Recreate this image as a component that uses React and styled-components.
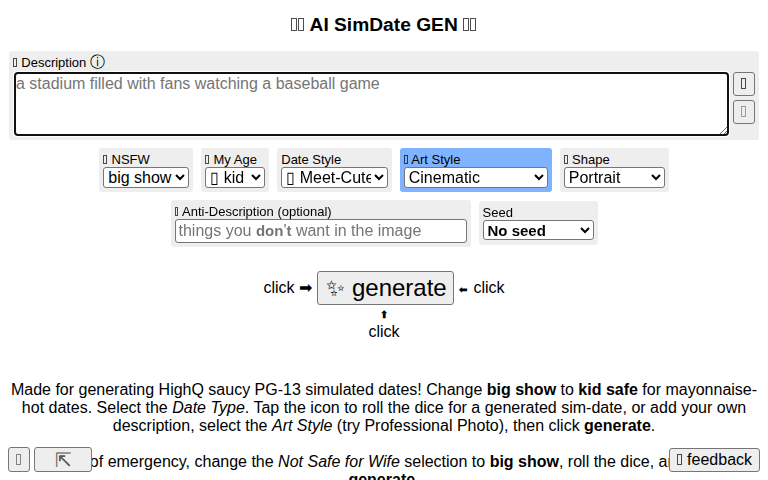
import React from 'react';
import styled, { createGlobalStyle } from 'styled-components';

const GlobalStyle = createGlobalStyle`
  html, body {
    margin: 0;
    padding: 0;
    overflow: hidden;
    height: 480px;
    background: #fff;
    font-family: "Liberation Sans", Arial, sans-serif;
    color: #000;
  }
`;

const Page = styled.div`
  padding: 0 9px;
  text-align: center;
`;

// the empty box the browser shows for an emoji it has no font for
const Tofu = styled.span`
  display: inline-block;
  box-sizing: border-box;
  width: 0.3em;
  height: 0.66em;
  margin-right: 0.06em;
  border: 1px solid currentColor;
  opacity: 0.7;
`;

const Title = styled.h1`
  margin: 0;
  padding-top: 14px;
  height: 37px;
  font-size: 19.2px;
  line-height: 21px;
  font-weight: 700;
`;

const DescriptionPanel = styled.section`
  background: #eee;
  border-radius: 3px;
  height: 89px;
  box-sizing: border-box;
  padding: 4px;
  text-align: left;
  display: flex;
  flex-direction: column;
`;

const PanelLabel = styled.label`
  display: block;
  font-size: 13px;
  line-height: 15px;
  height: 17px;
`;

const InfoMark = styled.span`
  font-family: "DejaVu Sans", sans-serif;
  font-size: 15px;
  line-height: 15px;
`;

const DescriptionRow = styled.div`
  display: flex;
  gap: 4px;
  padding-left: 1px;
`;

const DescriptionInput = styled.textarea`
  width: 715px;
  height: 64px;
  box-sizing: border-box;
  margin: 0;
  padding: 2px 1px;
  border: 1px solid #767676;
  border-radius: 3px;
  font-family: "Liberation Sans", Arial, sans-serif;
  font-size: 16px;
  line-height: 18px;
  flex: none;
`;

const SideButtons = styled.div`
  display: flex;
  flex-direction: column;
  gap: 4px;
`;

const IconButton = styled.button`
  width: 22px;
  height: 24px;
  padding: 0;
  background: #eee;
  border: 1px solid #767676;
  border-radius: 3px;
  font-family: "Liberation Sans", Arial, sans-serif;
  font-size: 16px;
  color: ${p => (p.$muted ? '#777' : '#000')};
`;

const ControlRow = styled.div`
  display: flex;
  justify-content: center;
  align-items: flex-start;
  gap: 8px;
  margin-top: ${p => p.$top}px;
`;

const Control = styled.div`
  box-sizing: border-box;
  padding: 4px;
  border-radius: 3px;
  background: ${p => (p.$active ? '#80b3ff' : '#eee')};
  text-align: left;
  height: ${p => p.$height || 44}px;
  margin-top: ${p => p.$offset || 0}px;
  font-size: 13px;
  line-height: 15px;
`;

const ControlLabel = styled.label`
  display: block;
  font-size: 13px;
  line-height: 15px;
`;

const Picker = styled.select`
  display: block;
  box-sizing: border-box;
  width: ${p => p.$width}px;
  height: ${p => p.$height || 21}px;
  margin: 0;
  font-family: "Liberation Sans", Arial, sans-serif;
  font-size: ${p => p.$size || 16}px;
  font-weight: ${p => (p.$bold ? 700 : 400)};
  background: #fff;
  color: #000;
  border: 1px solid #767676;
  border-radius: 3px;
`;

const AntiField = styled.div`
  position: relative;
  width: 292px;
  height: 24px;
`;

const AntiInput = styled.input`
  display: block;
  box-sizing: border-box;
  width: 100%;
  height: 100%;
  margin: 0;
  padding: 1px 3px;
  font-family: "Liberation Sans", Arial, sans-serif;
  font-size: 16px;
  border: 1px solid #767676;
  border-radius: 3px;
`;

const AntiHint = styled.span`
  position: absolute;
  left: 4px;
  top: 3px;
  font-size: 16px;
  line-height: 18px;
  color: #757575;
  white-space: nowrap;
  pointer-events: none;

  b {
    font-size: 15px;
  }
`;

const GenerateRow = styled.div`
  display: flex;
  justify-content: center;
  align-items: center;
  gap: 5px;
  margin-top: 24px;
  font-size: 16px;
  line-height: 18px;
  height: 34px;
`;

const GenerateButton = styled.button`
  box-sizing: border-box;
  width: 137px;
  height: 34px;
  padding: 0 0 0 2px;
  background: #eee;
  border: 1px solid #767676;
  border-radius: 3px;
  font-family: "Liberation Sans", Arial, sans-serif;
  font-size: 24px;
  color: #000;
  white-space: nowrap;
`;

const Sparkle = styled.span`
  font-family: "DejaVu Sans", sans-serif;
  font-size: 23px;
`;

const Arrow = styled.span`
  font-size: ${p => p.$size || 16}px;
  font-weight: ${p => (p.$heavy ? 700 : 400)};
  line-height: 0;
  margin-right: ${p => p.$gap || 0}px;
`;

const UpHint = styled.div`
  margin-top: 2px;
  font-size: 16px;
  line-height: 18px;
`;

const ArrowLine = styled.div`
  font-size: 10px;
  font-weight: 700;
  line-height: 16px;
`;

const Intro = styled.div`
  margin-top: 40px;
  font-size: 16px;
  line-height: 18px;
`;

const CornerButtons = styled.div`
  position: fixed;
  left: 8px;
  bottom: 8px;
  display: flex;
  gap: 4px;
  background: #fff;
`;

const FloatButton = styled.button`
  box-sizing: border-box;
  width: ${p => p.$width}px;
  height: 25px;
  padding: 0;
  background: #eee;
  border: 1px solid #767676;
  border-radius: 3px;
  font-family: "Liberation Sans", Arial, sans-serif;
  font-size: ${p => p.$size || 16}px;
  color: ${p => p.$color || '#000'};
  white-space: nowrap;
`;

const FeedbackButton = styled(FloatButton)`
  position: fixed;
  right: 8px;
  bottom: 8px;
  height: 24px;
`;

const App = () => (
  <Page>
    <GlobalStyle />
    <Title><Tofu /><Tofu /> AI SimDate GEN <Tofu /><Tofu /></Title>

    <DescriptionPanel>
      <PanelLabel><Tofu /> Description <InfoMark>ⓘ</InfoMark></PanelLabel>
      <DescriptionRow>
        <DescriptionInput autoFocus placeholder="a stadium filled with fans watching a baseball game" />
        <SideButtons>
          <IconButton><Tofu /></IconButton>
          <IconButton $muted><Tofu /></IconButton>
        </SideButtons>
      </DescriptionRow>
    </DescriptionPanel>

    <ControlRow $top={8}>
      <Control>
        <ControlLabel><Tofu /> NSFW</ControlLabel>
        <Picker $width={86}><option>big show</option></Picker>
      </Control>
      <Control>
        <ControlLabel><Tofu /> My Age</ControlLabel>
        <Picker $width={60}><option>▯ kid</option></Picker>
      </Control>
      <Control>
        <ControlLabel>Date Style</ControlLabel>
        <Picker $width={106.5}><option>▯ Meet-Cute</option></Picker>
      </Control>
      <Control $active>
        <ControlLabel><Tofu /> Art Style</ControlLabel>
        <Picker $width={144}><option>Cinematic</option></Picker>
      </Control>
      <Control>
        <ControlLabel><Tofu /> Shape</ControlLabel>
        <Picker $width={101}><option>Portrait</option></Picker>
      </Control>
    </ControlRow>

    <ControlRow $top={8}>
      <Control $height={47}>
        <ControlLabel><Tofu /> Anti-Description (optional)</ControlLabel>
        <AntiField>
          <AntiInput />
          <AntiHint>things you <b>don</b>'<b>t</b> want in the image</AntiHint>
        </AntiField>
      </Control>
      <Control $height={44} $offset={1}>
        <ControlLabel>Seed</ControlLabel>
        <Picker $width={111} $size={15} $bold $height={20}><option>No seed</option></Picker>
      </Control>
    </ControlRow>

    <GenerateRow>
      <span>click <Arrow>➡</Arrow></span>
      <GenerateButton><Sparkle>✨&#xFE0E;</Sparkle> generate</GenerateButton>
      <span><Arrow $size={10} $gap={2} $heavy>⬅</Arrow> click</span>
    </GenerateRow>
    <UpHint>
      <ArrowLine>⬆</ArrowLine>
      click
    </UpHint>

    <Intro>
      Made for generating HighQ saucy PG-13 simulated dates! Change <b>big show</b> to <b>kid safe</b> for mayonnaise-hot dates. Select the <i>Date Type</i>. Tap the icon to roll the dice for a generated sim-date, or add your own description, select the <i>Art Style</i> (try Professional Photo), then click <b>generate</b>.
      <br />
      <br />
      In case of emergency, change the <i>Not Safe for Wife</i> selection to <b>big show</b>, roll the dice, and tap on <b>generate</b>.
    </Intro>

    <CornerButtons>
      <FloatButton $width={22} $color="#555"><Tofu /></FloatButton>
      <FloatButton $width={58} $size={20} $color="#555">⇱</FloatButton>
    </CornerButtons>
    <FeedbackButton $width={91}><Tofu /> feedback</FeedbackButton>
  </Page>
);

export default App;
